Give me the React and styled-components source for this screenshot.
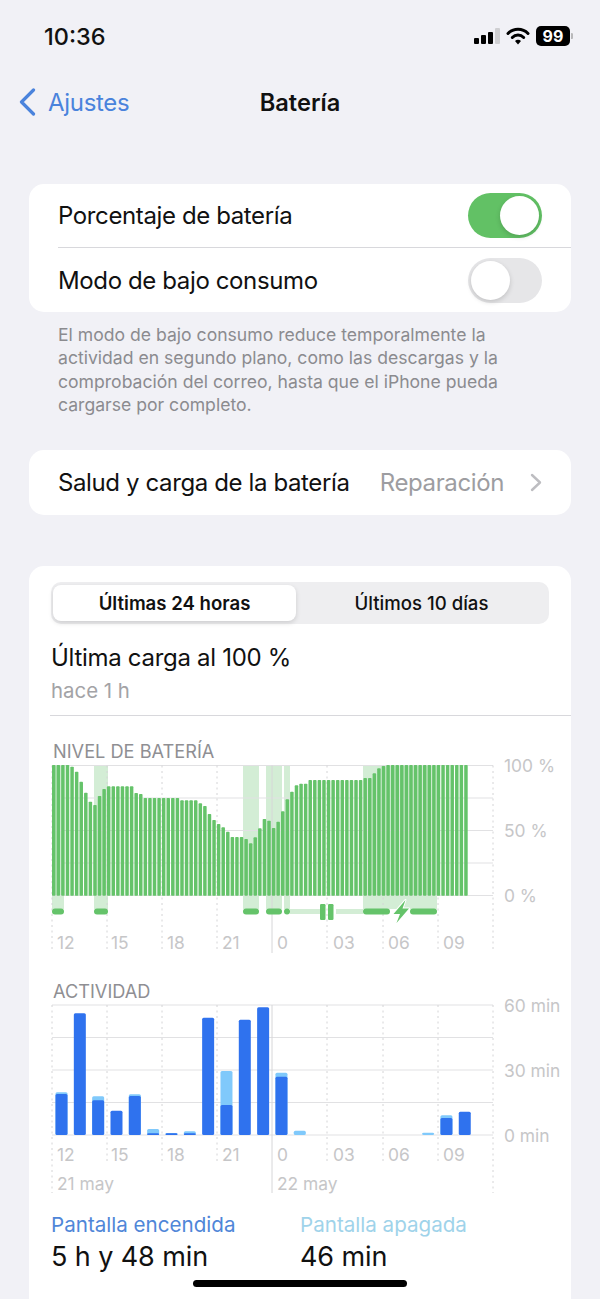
import React from "react";
import styled, { createGlobalStyle } from "styled-components";

const Global = createGlobalStyle`
  html, body { margin: 0; padding: 0; background: #f1f1f6; }
  * { box-sizing: border-box; }
`;

const Screen = styled.div`
  position: relative;
  width: 600px;
  height: 1299px;
  overflow: hidden;
  background: #f1f1f6;
  font-family: Inter, "Liberation Sans", sans-serif;
  color: #111;
`;
const StatusBar = styled.div`
  height: 72px;
  padding: 23px 27px 0 44px;
  display: flex;
  justify-content: space-between;
  align-items: flex-start;
`;
const Time = styled.div`
  font-size: 23.5px;
  font-weight: 500;
  line-height: 27px;
`;
const StatusIcons = styled.div`
  display: flex;
  align-items: center;
  gap: 6px;
  height: 26px;
`;
const Nav = styled.div`
  height: 60px;
  padding-left: 19px;
  display: grid;
  grid-template-columns: 1fr auto 1fr;
  align-items: center;
`;
const Back = styled.div`
  display: flex;
  align-items: center;
  gap: 12px;
  color: #4a83dc;
  font-size: 24px;
  letter-spacing: -0.3px;
`;
const Title = styled.div`
  font-size: 23.6px;
  font-weight: 600;
  margin-right: 19px;
`;
const Card = styled.div`
  margin: ${(p) => p.$mt}px 29px 0;
  padding-top: ${(p) => p.$pt || 0}px;
  height: ${(p) => (p.$h ? `${p.$h}px` : "auto")};
  background: #fff;
  border-radius: 15px;
`;
const Row = styled.div`
  height: ${(p) => p.$h}px;
  padding: 0 29px;
  display: flex;
  align-items: center;
  justify-content: space-between;
  font-size: 24px;
  letter-spacing: -0.38px;
`;
const Sep = styled.div`
  height: 1px;
  background: #d8d8dc;
  margin-left: ${(p) => p.$ml}px;
`;
const Toggle = styled.div`
  width: 74px;
  height: 45px;
  border-radius: 23px;
  padding: 3px;
  display: flex;
  justify-content: ${(p) => (p.$on ? "flex-end" : "flex-start")};
  background: ${(p) => (p.$on ? "#62c165" : "#e6e6e8")};
`;
const Knob = styled.div`
  width: 39px;
  height: 39px;
  border-radius: 50%;
  background: #fff;
  box-shadow: 0 2px 5px rgba(0, 0, 0, 0.16);
`;
const Footnote = styled.p`
  margin: 11px 77px 0 58px;
  height: 127px;
  font-size: 17.6px;
  line-height: 23.4px;
  color: #8b8b8f;
`;
const Value = styled.div`
  display: flex;
  align-items: center;
  gap: 26px;
  color: #9d9da1;
`;
const Seg = styled.div`
  margin: 0 22px;
  height: 42px;
  padding: 3px 2px;
  border-radius: 10px;
  background: #eeeef0;
  display: grid;
  grid-template-columns: 243px 1fr;
`;
const SegItem = styled.div`
  display: flex;
  align-items: center;
  justify-content: center;
  font-size: 18.6px;
  border-radius: 8px;
  background: ${(p) => (p.$active ? "#fff" : "transparent")};
  box-shadow: ${(p) => (p.$active ? "0 2px 5px rgba(0,0,0,.14)" : "none")};
  font-weight: ${(p) => (p.$active ? 600 : 500)};
`;
const CardHead = styled.div`
  padding: 19px 22px 0;
  height: 91px;
`;
const Heading = styled.div`
  font-size: 24px;
  line-height: 29px;
  letter-spacing: -0.3px;
`;
const Sub = styled.div`
  margin-top: 7px;
  font-size: 20.4px;
  line-height: 24px;
  color: #a3a3a6;
`;
const ChartLabel = styled.div`
  margin: ${(p) => p.$mt}px 0 0 24px;
  height: 22px;
  line-height: 22px;
  font-size: 18.2px;
  color: #8f8f93;
`;
const ChartSvg = styled.svg`
  display: block;
  margin-left: 21px;
  margin-top: ${(p) => p.$mt}px;
`;
const AxisText = styled.text`
  font-family: Inter, "Liberation Sans", sans-serif;
  font-size: 17.4px;
  fill: #c6c6c8;
`;
const Totals = styled.div`
  margin-top: 14px;
  padding-left: 22px;
  display: grid;
  grid-template-columns: 249px auto;
`;
const TotalName = styled.div`
  font-size: 20.6px;
  line-height: 24px;
  color: ${(p) => p.$c};
`;
const TotalValue = styled.div`
  margin-top: 4px;
  font-size: 27px;
  line-height: 32px;
  letter-spacing: -0.1px;
`;
const HomeBar = styled.div`
  position: absolute;
  left: 193px;
  top: 1280px;
  width: 214px;
  height: 7px;
  border-radius: 4px;
  background: #000;
`;

const z = (v) => 768 + (v - 85) / 3; // battery top in page coords, from reference crop units
const levels = [
  85, 85, 85, 85, 90, 105, 135, 168, 195, 205, 178, 157, 149, 149, 149, 149, 149, 149, 169, 172,
  184, 184, 184, 184, 184, 184, 184, 184, 191, 191, 191, 191, 200, 208, 232, 250, 262, 272, 285, 301,
  301, 301, 307, 320, 302, 275, 247, 252, 274, 255, 224, 188, 165, 146, 141, 141, 130, 130, 130, 130,
  130, 130, 130, 130, 130, 130, 130, 130, 124, 124, 110, 95, 88, 85, 85, 85, 85, 85, 85, 85,
  85, 85, 85, 85, 85, 85, 85, 85, 85, 85, 85,
];
const hx = [52, 107, 162, 217, 272, 327, 383, 438, 493];
const hours = [["12", 57], ["15", 111], ["18", 167], ["21", 222], ["0", 277], ["03", 333], ["06", 388], ["09", 443]];
const bands = [[52, 64], [94, 108], [243, 259], [266, 282], [284, 290], [363, 380], [380, 437]];
const pills = [[52, 64], [94, 108], [243, 259], [266, 282], [284, 290], [363, 390], [410, 437]];

function Grid({ top, bottom, dotEnd, lastEnd, solidEnd, labels, hourY, dateY }) {
  const step = (bottom - top) / 4;
  return (
    <>
      {[0, 1, 2, 3, 4].map((i) => (
        <line key={i} x1="52" x2="493" y1={top + i * step} y2={top + i * step} stroke="#e1e1e3" strokeWidth="1" />
      ))}
      {hx.map((x, i) =>
        x === 272 ? (
          <line key={x} x1={x} x2={x} y1={top} y2={solidEnd} stroke="#d6d6d8" strokeWidth="1" />
        ) : (
          <line key={x} x1={x} x2={x} y1={top} y2={i === 0 || i === 8 ? lastEnd : dotEnd} stroke="#d4d4d6" strokeWidth="1" strokeDasharray="2 3.5" />
        )
      )}
      {labels.map(([t, y]) => (
        <AxisText key={t} x="504" y={y + 6}>{t}</AxisText>
      ))}
      {hours.map(([t, x]) => (
        <AxisText key={t} x={x} y={hourY}>{t}</AxisText>
      ))}
      {dateY && (
        <>
          <AxisText x="57" y={dateY}>21 may</AxisText>
          <AxisText x="277" y={dateY}>22 may</AxisText>
        </>
      )}
    </>
  );
}

function BatteryChart() {
  return (
    <ChartSvg $mt={-7} width="530" height="204" viewBox="50 758 530 204">
      {bands.map(([a, b]) => (
        <rect key={a} x={a} width={b - a} y="768" height={912 - 768} fill="#d3edd5" />
      ))}
      <Grid
        top={768.5}
        bottom={898.5}
        dotEnd={955}
        lastEnd={955}
        solidEnd={956}
        labels={[["100 %", 769], ["50 %", 834], ["0 %", 899]]}
        hourY={952}
      />
      {levels.map((v, i) => {
        const y = z(v);
        return <rect key={i} x={52 + i * 4.58} y={y} width="3.5" height={898.7 - y} rx="0.8" fill="#65c36a" />;
      })}
      <rect x="290" y="912" width="30" height="5" fill="#d3edd5" />
      <rect x="336" y="912" width="27" height="5" fill="#d3edd5" />
      {pills.map(([a, b]) => (
        <rect key={a} x={a} y="911.5" width={b - a} height="6" rx="3" fill="#65c36a" />
      ))}
      <rect x="320" y="907" width="5.5" height="16" rx="1.2" fill="#65c36a" />
      <rect x="328" y="907" width="5.5" height="16" rx="1.2" fill="#65c36a" />
      <path d="M405.5 903 L393.5 917 L400 917 L396.5 926 L409 911.5 L402.5 911.5 Z" fill="#65c36a" stroke="#fff" strokeWidth="2" strokeLinejoin="round" paintOrder="stroke" />
    </ChartSvg>
  );
}

const act = [
  [379, 384], [142, 142], [391, 403], [434, 434], [385, 390], [489, 502], [501, 502], [496, 502],
  [155, 155], [315, 417], [161, 161], [124, 124], [320, 332], [494, 508],
];
const actExtra = [[20, 500, 508], [21, 448, 456], [22, 437, 437]];
const ya = (v) => 1009 + (v - 117) / 3;

function Bar({ i, light, dark }) {
  const x = 55.5 + i * 18.33;
  return (
    <>
      {light < dark && <rect x={x} y={ya(light)} width="12" height={1139 - ya(light)} rx="1.5" fill="#80c9fb" />}
      {dark < 508 && <rect x={x} y={ya(dark)} width="12" height={1139 - ya(dark)} rx="1.5" fill="#2f72ee" />}
    </>
  );
}

function ActivityChart() {
  const all = [...act.map(([l, d], i) => [i, l, d]), ...actExtra];
  return (
    <ChartSvg $mt={-7} width="530" height="204" viewBox="50 999 530 204">
      <Grid
        top={1009}
        bottom={1139}
        dotEnd={1165}
        lastEnd={1197}
        solidEnd={1197}
        labels={[["60 min", 1010], ["30 min", 1075], ["0 min", 1140]]}
        hourY={1165}
        dateY={1194}
      />
      {all.map(([i, l, d]) => (
        <Bar key={i} i={i} light={l} dark={d} />
      ))}
    </ChartSvg>
  );
}

export default function App() {
  return (
    <Screen>
      <Global />
      <StatusBar>
        <Time>10:36</Time>
        <StatusIcons>
          <svg width="26" height="16" viewBox="0 0 26 16">
            <rect x="0" y="10" width="5" height="6" rx="1" fill="#000" />
            <rect x="7" y="7" width="5" height="9" rx="1" fill="#000" />
            <rect x="14" y="4" width="5" height="12" rx="1" fill="#000" />
            <rect x="21" y="0" width="5" height="16" rx="1" fill="#cfcfd2" />
          </svg>
          <svg width="24" height="18" viewBox="0 0 24 18">
            <path d="M2 6.5 A14 14 0 0 1 22 6.5" fill="none" stroke="#000" strokeWidth="3" strokeLinecap="round" />
            <path d="M6.3 10.5 A8 8 0 0 1 17.7 10.5" fill="none" stroke="#000" strokeWidth="3" strokeLinecap="round" />
            <path d="M9 14 L12 17.5 L15 14 A4.2 4.2 0 0 0 9 14 Z" fill="#000" />
          </svg>
          <svg width="37" height="20" viewBox="0 0 37 20">
            <rect x="0" y="0" width="34" height="20" rx="5" fill="#000" />
            <path d="M35 7 A3 3 0 0 1 35 13 Z" fill="#b8b8ba" />
            <text x="17" y="15.5" textAnchor="middle" fontFamily="Inter, sans-serif" fontSize="16" fontWeight="700" fill="#fff">99</text>
          </svg>
        </StatusIcons>
      </StatusBar>
      <Nav>
        <Back>
          <svg width="17" height="28" viewBox="0 0 17 28">
            <path d="M14.5 2 L2.5 14 L14.5 26" fill="none" stroke="#4a83dc" strokeWidth="3.2" strokeLinecap="round" strokeLinejoin="round" />
          </svg>
          Ajustes
        </Back>
        <Title>Batería</Title>
        <span />
      </Nav>
      <Card $mt={52}>
        <Row $h={63}>
          Porcentaje de batería
          <Toggle $on><Knob /></Toggle>
        </Row>
        <Sep $ml={29} />
        <Row $h={64}>
          Modo de bajo consumo
          <Toggle><Knob /></Toggle>
        </Row>
      </Card>
      <Footnote>
        El modo de bajo consumo reduce temporalmente la actividad en segundo plano, como las descargas y la comprobación del correo, hasta que el iPhone pueda cargarse por completo.
      </Footnote>
      <Card $mt={0}>
        <Row $h={65}>
          Salud y carga de la batería
          <Value>
            Reparación
            <svg width="12" height="19" viewBox="0 0 12 19">
              <path d="M2 2 L10 9.5 L2 17" fill="none" stroke="#bdbdc1" strokeWidth="2.4" strokeLinecap="round" strokeLinejoin="round" />
            </svg>
          </Value>
        </Row>
      </Card>
      <Card $mt={51} $pt={16} $h={800}>
        <Seg>
          <SegItem $active>Últimas 24 horas</SegItem>
          <SegItem>Últimos 10 días</SegItem>
        </Seg>
        <CardHead>
          <Heading>Última carga al 100 %</Heading>
          <Sub>hace 1 h</Sub>
        </CardHead>
        <Sep $ml={21} />
        <ChartLabel $mt={24}>NIVEL DE BATERÍA</ChartLabel>
        <BatteryChart />
        <ChartLabel $mt={21}>ACTIVIDAD</ChartLabel>
        <ActivityChart />
        <Totals>
          <div>
            <TotalName $c="#4f86d8">Pantalla encendida</TotalName>
            <TotalValue>5 h y 48 min</TotalValue>
          </div>
          <div>
            <TotalName $c="#9fd3ea">Pantalla apagada</TotalName>
            <TotalValue>46 min</TotalValue>
          </div>
        </Totals>
      </Card>
      <HomeBar />
    </Screen>
  );
}
